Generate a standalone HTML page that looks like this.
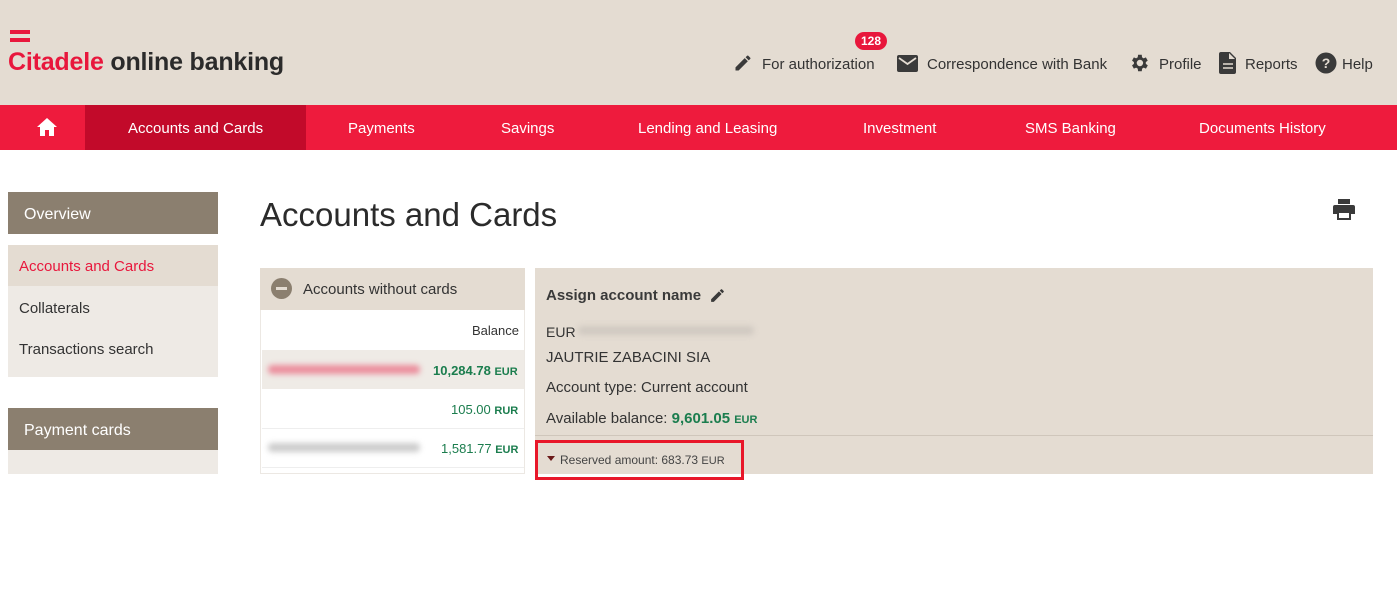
<!DOCTYPE html>
<html><head><meta charset="utf-8"><style>
*{margin:0;padding:0;box-sizing:border-box}
body{width:1397px;height:602px;background:#fff;font-family:"Liberation Sans",sans-serif;color:#333;position:relative;overflow:hidden}
.abs{position:absolute}
.hdr{left:0;top:0;width:1397px;height:105px;background:#e4dcd2}
.nav{left:0;top:105px;width:1397px;height:45px;background:#ee1b3d;color:#fff;font-size:15px}
.nav span{position:absolute;top:15px}
.top{font-size:15px;color:#333;top:56px}
.blur{filter:blur(3px);height:9px;border-radius:4px}
</style></head><body>
<div class="abs hdr"></div>
<div class="abs" style="left:10px;top:30px;width:20px;height:4px;background:#e8173c"></div>
<div class="abs" style="left:10px;top:38px;width:20px;height:4px;background:#e8173c"></div>
<div class="abs" style="left:8px;top:48px;font-size:25px;font-weight:bold;color:#e8173c;letter-spacing:-0.2px">Citadele <span style="color:#2b2b2b">online banking</span></div>

<svg class="abs" style="left:733px;top:53px" width="20" height="20" viewBox="0 0 24 24"><path fill="#3a3a3a" d="M3 17.25V21h3.75L17.8 9.94l-3.75-3.75L3 17.25zM20.7 7.04a1 1 0 000-1.41l-2.34-2.34a1 1 0 00-1.41 0l-1.83 1.83 3.75 3.75 1.83-1.83z"/></svg>
<div class="abs top" style="left:762px">For authorization</div>
<div class="abs" style="left:855px;top:32px;width:32px;height:18px;border-radius:9px;background:#e8173c;color:#fff;font-size:12px;font-weight:bold;text-align:center;line-height:18px">128</div>
<svg class="abs" style="left:897px;top:55px" width="21" height="17" viewBox="0 0 21 17"><rect x="0" y="0" width="21" height="17" rx="2" fill="#3a3a3a"/><path d="M2 3l8.5 6L19 3" stroke="#e4dcd2" stroke-width="1.8" fill="none"/></svg>
<div class="abs top" style="left:927px">Correspondence with Bank</div>
<svg class="abs" style="left:1128px;top:52px" width="22" height="22" viewBox="0 0 24 24"><path fill="#3a3a3a" d="M19.4 13a7.5 7.5 0 000-2l2.1-1.6-2-3.5-2.5 1a7.6 7.6 0 00-1.7-1L15 3h-4l-.4 2.9a7.6 7.6 0 00-1.7 1l-2.5-1-2 3.5L6.5 11a7.5 7.5 0 000 2l-2.1 1.6 2 3.5 2.5-1c.5.4 1.1.7 1.7 1L11 21h4l.4-2.9c.6-.3 1.2-.6 1.700-1l2.5 1 2-3.5zM13 15.5a3.5 3.5 0 110-7 3.5 3.5 0 010 7z"/></svg>
<div class="abs top" style="left:1159px">Profile</div>
<svg class="abs" style="left:1219px;top:52px" width="18" height="22" viewBox="0 0 18 22"><path fill="#3a3a3a" d="M2 0h9l6 6v14a2 2 0 01-2 2H2a2 2 0 01-2-2V2a2 2 0 012-2zm8 1v6h6z"/><path stroke="#e4dcd2" stroke-width="1.6" d="M4 12h10M4 16h10"/></svg>
<div class="abs top" style="left:1245px">Reports</div>
<svg class="abs" style="left:1315px;top:52px" width="22" height="22" viewBox="0 0 22 22"><circle cx="11" cy="11" r="10.5" fill="#3a3a3a"/><text x="11" y="16" font-size="14" font-weight="bold" fill="#e4dcd2" text-anchor="middle" font-family="Liberation Sans">?</text></svg>
<div class="abs top" style="left:1342px">Help</div>

<div class="abs nav">
<div class="abs" style="left:85px;top:0;width:221px;height:45px;background:#c20a2a"></div>
<svg class="abs" style="left:36px;top:12px" width="22" height="20" viewBox="0 0 22 20"><path fill="#fff" d="M11 1L1 10h3v9h5v-6h4v6h5v-9h3z"/></svg>
<span style="left:128px">Accounts and Cards</span>
<span style="left:348px">Payments</span>
<span style="left:501px">Savings</span>
<span style="left:638px">Lending and Leasing</span>
<span style="left:863px">Investment</span>
<span style="left:1025px">SMS Banking</span>
<span style="left:1199px">Documents History</span>
</div>

<div class="abs" style="left:8px;top:192px;width:210px;height:42px;background:#8b7f6f;color:#fff;font-size:16px;padding:14px 16px">Overview</div>
<div class="abs" style="left:8px;top:245px;width:210px;height:132px;background:#eeeae5"></div>
<div class="abs" style="left:8px;top:245px;width:210px;height:41px;background:#e4dcd2"></div>
<div class="abs" style="left:19px;top:258px;font-size:15px;color:#e8173c">Accounts and Cards</div>
<div class="abs" style="left:19px;top:300px;font-size:15px">Collaterals</div>
<div class="abs" style="left:19px;top:341px;font-size:15px">Transactions search</div>
<div class="abs" style="left:8px;top:408px;width:210px;height:42px;background:#8b7f6f;color:#fff;font-size:16px;padding:14px 16px">Payment cards</div>
<div class="abs" style="left:8px;top:450px;width:210px;height:24px;background:#eeeae5"></div>

<div class="abs" style="left:260px;top:196px;font-size:33px;color:#2b2b2b">Accounts and Cards</div>
<svg class="abs" style="left:1333px;top:199px" width="22" height="21" viewBox="0 0 22 21"><path fill="#3a3a3a" d="M5 0h12v5H5zM2 6h18a2 2 0 012 2v7h-4v6H4v-6H0V8a2 2 0 012-2zm4 8v5h10v-5z"/></svg>

<div class="abs" style="left:260px;top:268px;width:265px;height:206px;border:1px solid #ece8e3;background:#fff"></div>
<div class="abs" style="left:260px;top:268px;width:265px;height:42px;background:#e4dcd2"></div>
<div class="abs" style="left:271px;top:278px;width:21px;height:21px;border-radius:50%;background:#8b7f6f"></div>
<div class="abs" style="left:276px;top:287px;width:11px;height:3px;background:#e4dcd2"></div>
<div class="abs" style="left:303px;top:281px;font-size:15px">Accounts without cards</div>
<div class="abs" style="left:472px;top:323px;font-size:13px">Balance</div>
<div class="abs" style="left:262px;top:350px;width:262px;height:39px;background:#efebe6"></div>
<div class="abs blur" style="left:268px;top:365px;width:152px;background:#eb8d9c"></div>
<div class="abs" style="left:433px;top:363px;font-size:13px;font-weight:bold;color:#1b7d4e">10,284.78 <span style="font-size:11px">EUR</span></div>
<div class="abs" style="left:451px;top:402px;font-size:13px;color:#1b7d4e">105.00 <b style="font-size:11px">RUR</b></div>
<div class="abs" style="left:262px;top:428px;width:262px;height:1px;background:#eee"></div>
<div class="abs blur" style="left:268px;top:443px;width:152px;background:#ccc"></div>
<div class="abs" style="left:441px;top:441px;font-size:13px;color:#1b7d4e">1,581.77 <b style="font-size:11px">EUR</b></div>
<div class="abs" style="left:262px;top:467px;width:262px;height:1px;background:#eee"></div>

<div class="abs" style="left:535px;top:268px;width:838px;height:206px;background:#e4dcd2"></div>
<div class="abs" style="left:546px;top:287px;font-size:15px;font-weight:bold;color:#3a3a3a">Assign account name</div>
<svg class="abs" style="left:709px;top:287px" width="17" height="17" viewBox="0 0 24 24"><path fill="#3a3a3a" d="M3 17.25V21h3.75L17.8 9.94l-3.75-3.75L3 17.25zM20.7 7.04a1 1 0 000-1.41l-2.34-2.34a1 1 0 00-1.41 0l-1.83 1.83 3.75 3.75 1.83-1.83z"/></svg>
<div class="abs" style="left:546px;top:324px;font-size:14px">EUR</div>
<div class="abs blur" style="left:578px;top:326px;width:176px;background:#d0c9c1"></div>
<div class="abs" style="left:546px;top:349px;font-size:15px">JAUTRIE ZABACINI SIA</div>
<div class="abs" style="left:546px;top:379px;font-size:15px">Account type: Current account</div>
<div class="abs" style="left:546px;top:410px;font-size:15px">Available balance: <b style="color:#1b7d4e">9,601.05</b> <b style="color:#1b7d4e;font-size:11px">EUR</b></div>
<div class="abs" style="left:535px;top:435px;width:838px;height:1px;background:#cfc6bb"></div>
<div class="abs" style="left:535px;top:440px;width:209px;height:40px;border:3px solid #e8172a"></div>
<div class="abs" style="left:547px;top:456px;width:0;height:0;border-left:4px solid transparent;border-right:4px solid transparent;border-top:5px solid #6b1a1a"></div>
<div class="abs" style="left:560px;top:453px;font-size:12px;color:#444">Reserved amount: 683.73 <span style="font-size:11px">EUR</span></div>
</body></html>
